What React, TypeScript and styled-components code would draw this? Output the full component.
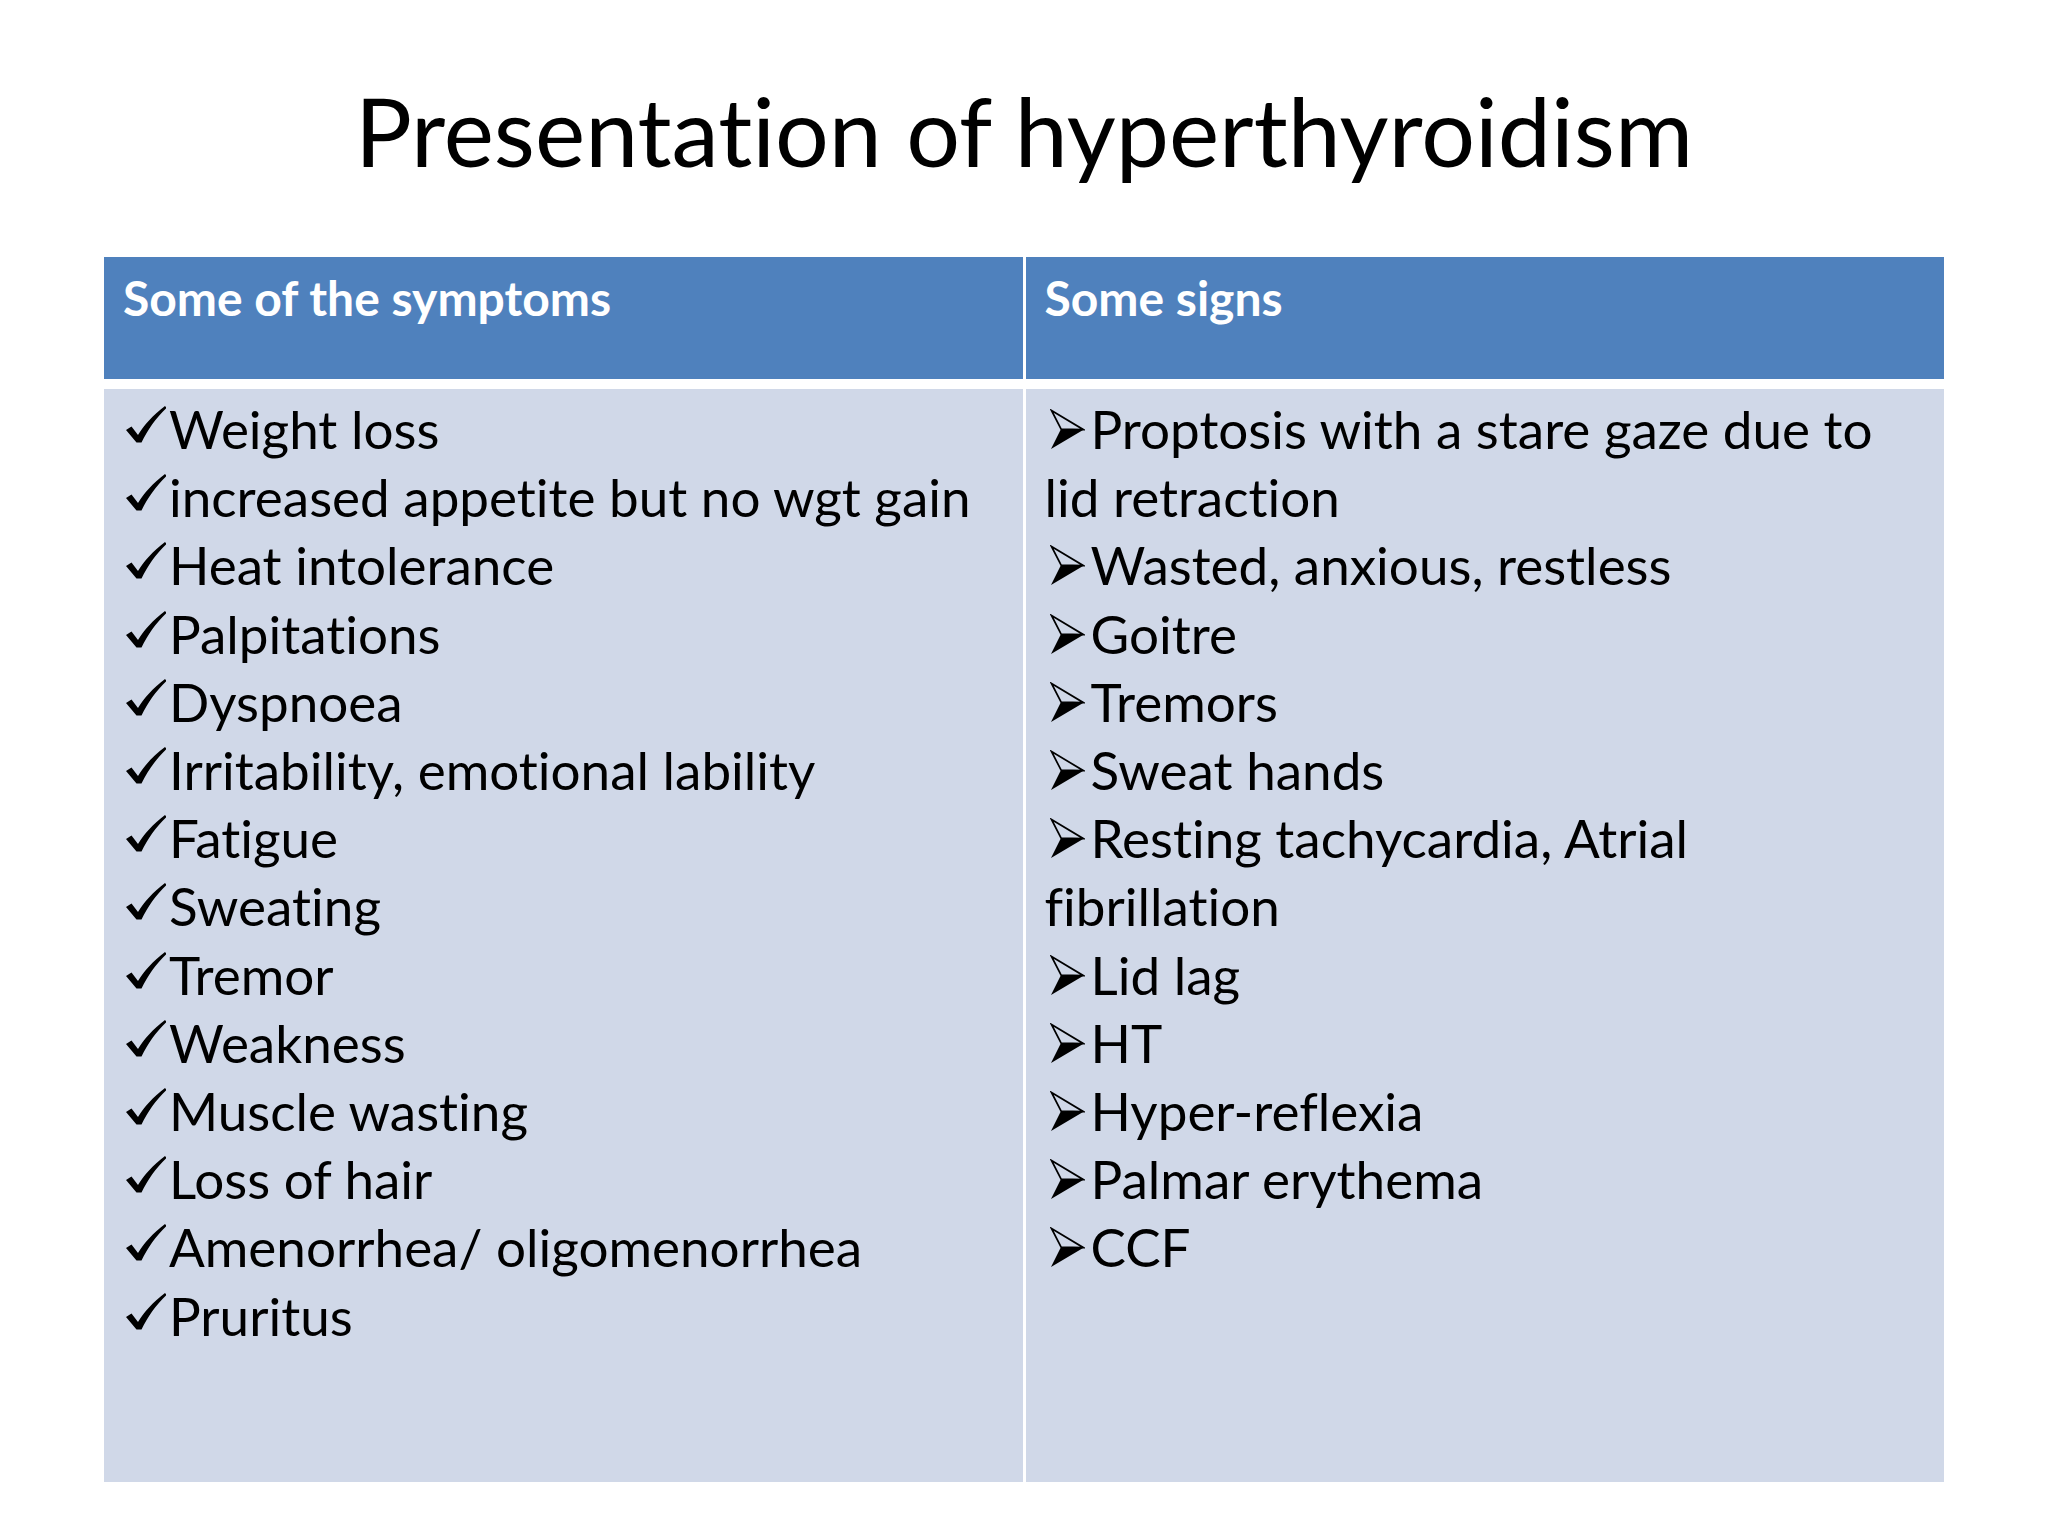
import styled, { createGlobalStyle } from 'styled-components';

const slideFont = `Lato, "Open Sans", "Liberation Sans", sans-serif`;

const GlobalStyle = createGlobalStyle`
  html, body {
    margin: 0;
    padding: 0;
    background: #fff;
  }
  body {
    font-family: ${slideFont};
    font-variant-ligatures: none;
    color: #000;
  }
`;

//Styles
const Slide = styled.div`
  width: 2048px;
  height: 1536px;
  display: flex;
  flex-direction: column;
  align-items: stretch;
  box-sizing: border-box;
  padding: 73px 104px 0;
  background: #fff;
`;

const Title = styled.h1`
  margin: 0;
  font-family: ${slideFont};
  font-weight: 400;
  font-size: 95px;
  line-height: 114px;
  text-align: center;
  color: #000;
`;

const Table = styled.div`
  margin-top: 70px;
  display: grid;
  grid-template-columns: 1fr 1fr;
  grid-template-rows: 122px 1093px;
  column-gap: 3px;
  row-gap: 10px;
  background: #fff;
`;

const HeaderCell = styled.div`
  background: #4f81bd;
  color: #fff;
  padding: 12px 19px 0;
  font-weight: 700;
  font-size: 48px;
  line-height: 57px;
`;

const BodyCell = styled.div`
  background: #d0d8e8;
  padding: 6px 19px 0;
  font-size: 53px;
  line-height: 68.2px;
`;

const Item = styled.div`
  white-space: nowrap;
`;

const Bullet = styled.svg<{ $lift: number; $gapLeft: number; $gapRight: number }>`
  display: inline-block;
  vertical-align: ${(p) => p.$lift}px;
  margin-left: ${(p) => p.$gapLeft}px;
  margin-right: ${(p) => p.$gapRight}px;
`;

const CheckIcon = () => (
  <Bullet $lift={6} $gapLeft={3} $gapRight={3} width="40" height="37" viewBox="0 0 40 37">
    <path
      d="M0 24 L5.5 20.5 L12 29 C18 19 27 9 39 0 L40.5 2 C30 12 21.5 24 15.5 36.5 L10.5 36.5 Z"
      fill="#000"
    />
  </Bullet>
);

const ArrowIcon = () => (
  <Bullet $lift={-1} $gapLeft={5} $gapRight={6} width="35" height="41" viewBox="0 0 35 41">
    <polygon points="1.5,1.5 33.5,20.7 11,20" fill="none" stroke="#000" strokeWidth="1.7" strokeLinejoin="miter" />
    <polygon points="11,20 33.5,20.7 1,40" fill="#000" />
  </Bullet>
);

const symptoms = [
  'Weight loss',
  'increased appetite but no wgt gain',
  'Heat intolerance',
  'Palpitations',
  'Dyspnoea',
  'Irritability, emotional lability',
  'Fatigue',
  'Sweating',
  'Tremor',
  'Weakness',
  'Muscle wasting',
  'Loss of hair',
  'Amenorrhea/ oligomenorrhea',
  'Pruritus',
];

// second part of a pair goes on its own line, as on the slide
const signs: [string, string?][] = [
  ['Proptosis with a stare gaze due to', 'lid retraction'],
  ['Wasted, anxious, restless'],
  ['Goitre'],
  ['Tremors'],
  ['Sweat hands'],
  ['Resting tachycardia, Atrial', 'fibrillation'],
  ['Lid lag'],
  ['HT'],
  ['Hyper-reflexia'],
  ['Palmar erythema'],
  ['CCF'],
];

const App = () => {
  return (
    <>
      <GlobalStyle />
      <Slide>
        <Title>Presentation of hyperthyroidism</Title>
        <Table>
          <HeaderCell>Some of the symptoms</HeaderCell>
          <HeaderCell>Some signs</HeaderCell>
          <BodyCell>
            {symptoms.map((s) => (
              <Item key={s}>
                <CheckIcon />
                {s}
              </Item>
            ))}
          </BodyCell>
          <BodyCell>
            {signs.map(([first, rest]) => (
              <Item key={first}>
                <ArrowIcon />
                {first}
                {rest && (
                  <>
                    <br />
                    {rest}
                  </>
                )}
              </Item>
            ))}
          </BodyCell>
        </Table>
      </Slide>
    </>
  );
};

export default App;
